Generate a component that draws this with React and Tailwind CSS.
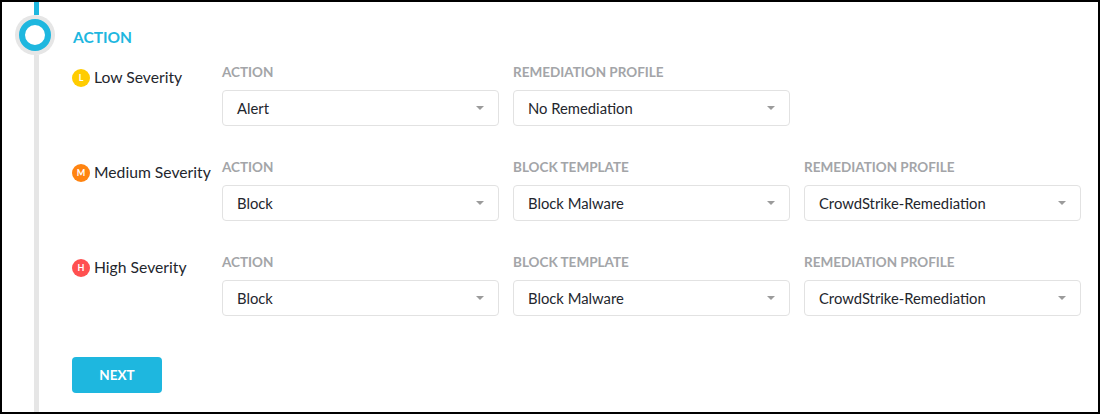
import React from "react"

const rows = [
  {
    name: "Low Severity",
    letter: "L",
    color: "bg-[#ffcc00]",
    fields: [
      { label: "ACTION", value: "Alert" },
      { label: "REMEDIATION PROFILE", value: "No Remediation" },
    ],
  },
  {
    name: "Medium Severity",
    letter: "M",
    color: "bg-[#ff8411]",
    fields: [
      { label: "ACTION", value: "Block" },
      { label: "BLOCK TEMPLATE", value: "Block Malware" },
      { label: "REMEDIATION PROFILE", value: "CrowdStrike-Remediation" },
    ],
  },
  {
    name: "High Severity",
    letter: "H",
    color: "bg-[#ff5050]",
    fields: [
      { label: "ACTION", value: "Block" },
      { label: "BLOCK TEMPLATE", value: "Block Malware" },
      { label: "REMEDIATION PROFILE", value: "CrowdStrike-Remediation" },
    ],
  },
]

const Field = ({ label, value }) => (
  <div className="w-[277px]">
    <div className="h-[18px] text-[13.5px] leading-[18px] font-bold text-[#a3a5a8]">{label}</div>
    <div className="mt-[9px] flex h-[36px] items-center justify-between rounded-[4px] border border-[#e2e2e2] bg-white pl-[14px] pr-[14px]">
      <span className="text-[14.8px] text-[#23262d]">{value}</span>
      <span className="h-0 w-0 border-x-[4.5px] border-t-[4px] border-x-transparent border-t-[#9b9b9b]" />
    </div>
  </div>
)

const App = () => {
  return (
    <div className="flex h-[414px] w-[1100px] overflow-hidden border-2 border-black bg-white font-['Lato','Liberation_Sans',sans-serif]">
      <div className="flex w-[70px] flex-col items-start">
        <div className="ml-[32px] h-[13px] w-[5px] bg-[#1eb7df]" />
        <div className="ml-[13px] flex h-[40px] w-[40px] shrink-0 items-center justify-center rounded-full bg-[#e6e6e6]">
          <div className="h-[32px] w-[32px] rounded-full border-[6px] border-[#1eb7df] bg-white" />
        </div>
        <div className="ml-[32px] w-[5px] flex-1 bg-[#e6e6e6]" />
      </div>
      <div className="flex-1">
        <h2 className="mt-[25px] ml-[1px] text-[15.5px] leading-[20px] font-bold text-[#1eb7df]">ACTION</h2>
        <div className="mt-[16px] flex flex-col gap-[32px]">
          {rows.map((row) => (
            <div key={row.name} className="flex">
              <div className="mt-[3px] flex h-[24px] w-[150px] items-center gap-[4px] text-[15.7px] text-[#23262d]">
                <span className={`flex h-[18px] w-[18px] items-center justify-center rounded-full text-[9px] font-bold text-white ${row.color}`}>
                  {row.letter}
                </span>
                <span className="whitespace-nowrap">{row.name}</span>
              </div>
              <div className="flex gap-[14px]">
                {row.fields.map((field) => (
                  <Field key={field.label} label={field.label} value={field.value} />
                ))}
              </div>
            </div>
          ))}
        </div>
        <button className="mt-[41px] h-[36px] w-[90px] rounded-[4px] bg-[#1eb7df] pt-[1px] text-[13.5px] font-bold text-white">
          NEXT
        </button>
      </div>
    </div>
  )
}

export default App
